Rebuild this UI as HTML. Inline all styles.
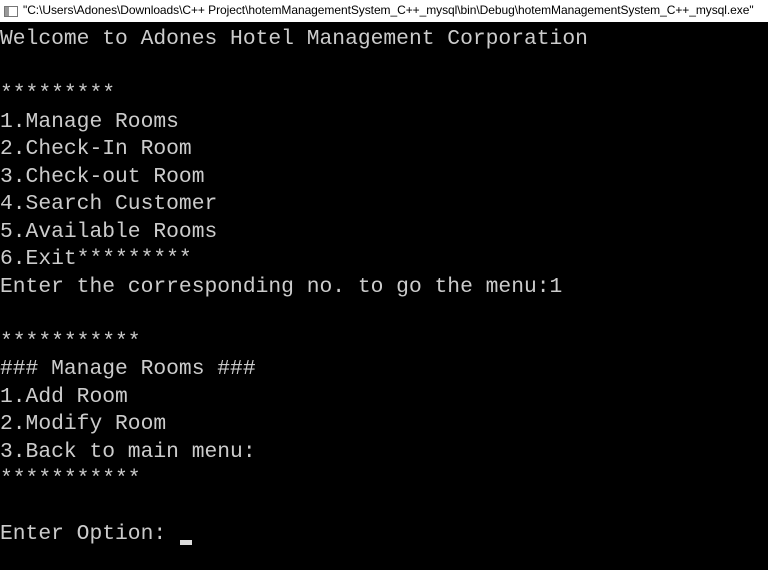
<!DOCTYPE html>
<html><head><style>
body{margin:0;width:768px;height:570px;background:#000;overflow:hidden;position:relative}
.tb{position:absolute;left:0;top:0;width:768px;height:22px;background:#fff;font-family:"Liberation Sans",sans-serif;font-size:12px;color:#000;line-height:22px;white-space:nowrap}
.tb span{position:absolute;left:23px;top:-1px;letter-spacing:-0.06px}
.ic{position:absolute;left:4px;top:6px;width:12px;height:9px;border:1px solid #777;background:#fff}
.ic:before{content:"";position:absolute;left:0;top:0;width:4px;height:9px;background:#999}
pre{position:absolute;left:0;top:26px;margin:0;font-family:"Liberation Mono",monospace;font-size:21.3px;line-height:27.5px;color:#cccccc;letter-spacing:0}
.cur{position:absolute;left:180px;top:540px;width:12px;height:5px;background:#ddd}
</style></head><body>
<div class="tb"><div class="ic"></div><span>"C:\Users\Adones\Downloads\C++ Project\hotemManagementSystem_C++_mysql\bin\Debug\hotemManagementSystem_C++_mysql.exe"</span></div>
<pre>Welcome to Adones Hotel Management Corporation

*********
1.Manage Rooms
2.Check-In Room
3.Check-out Room
4.Search Customer
5.Available Rooms
6.Exit*********
Enter the corresponding no. to go the menu:1

***********
### Manage Rooms ###
1.Add Room
2.Modify Room
3.Back to main menu:
***********

Enter Option: </pre>
<div class="cur"></div>
</body></html>
